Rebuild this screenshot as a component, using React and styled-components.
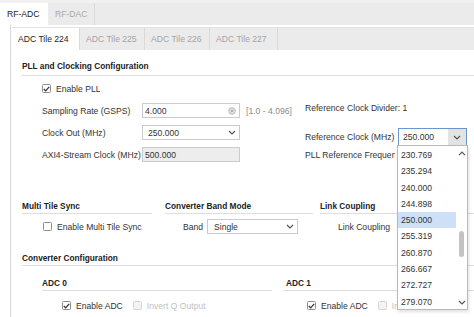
import React from 'react';
import styled, { createGlobalStyle } from 'styled-components';

const GlobalStyle = createGlobalStyle`
  * { box-sizing: border-box; }
  html, body {
    margin: 0;
    padding: 0;
    background: #fff;
  }
  body {
    font-family: "Liberation Sans", Arial, sans-serif;
    font-size: 8.6px;
    color: #333;
    overflow: hidden;
  }
`;

const Page = styled.div`
  width: 474px;
  height: 317px;
  overflow: hidden;
  background: #fff;
`;

const TopTabBar = styled.div`
  display: flex;
  height: 25px;
  background: #ebebeb;
  border-top: 3px solid #f1f1f1;
`;

const TopTab = styled.div`
  display: flex;
  align-items: center;
  width: ${p => p.$w}px;
  padding-left: 7px;
  background: ${p => (p.$active ? '#fff' : 'transparent')};
  color: ${p => (p.$active ? '#222' : '#a9a9a9')};
  border-right: ${p => (p.$active ? 'none' : '1px solid #d9d9d9')};
  white-space: nowrap;
`;

const Panel = styled.div`
  margin-left: 10px;
  border-left: 1px solid #d6d6d6;
  padding-top: 2px;
  height: 292px;
`;

const TileTabBar = styled.div`
  display: flex;
  height: 23px;
  margin-left: 1px;
  background: #ebebeb;
  border-top: 1px solid #e2e2e2;
`;

const TileTab = styled.div`
  display: flex;
  align-items: center;
  width: ${p => p.$w}px;
  padding-left: 6px;
  background: ${p => (p.$active ? '#fff' : 'transparent')};
  color: ${p => (p.$active ? '#1e1e1e' : '#a4a4a4')};
  border-right: 1px solid #d9d9d9;
  white-space: nowrap;
`;

const Body = styled.div`
  padding-left: 11px;
`;

const Heading = styled.div`
  font-weight: bold;
  font-size: 8.3px;
  color: #222;
  line-height: 11px;
  padding-top: ${p => p.$pt || 0}px;
  padding-bottom: ${p => (p.$pb == null ? 1 : p.$pb)}px;
  padding-left: ${p => p.$pl || 0}px;
  margin-top: ${p => p.$mt || 0}px;
  border-bottom: 1px solid #dedede;
  white-space: nowrap;
`;

const PllGrid = styled.div`
  display: flex;
`;

const LeftCol = styled.div`
  width: 283px;
  padding: 5px 0 0 20px;
  display: flex;
  flex-direction: column;
  gap: 7px;
`;

const RightCol = styled.div`
  display: flex;
  flex-direction: column;
`;

const Row = styled.div`
  display: flex;
  align-items: center;
  height: ${p => p.$h || 15}px;
  margin-top: ${p => p.$mt || 0}px;
  padding-left: ${p => p.$pl || 0}px;
  white-space: nowrap;
`;

const Label = styled.span`
  width: ${p => (p.$w ? `${p.$w}px` : 'auto')};
  flex-shrink: 0;
  overflow: hidden;
  color: ${p => (p.$disabled ? '#c2c2c2' : '#333')};
  white-space: nowrap;
`;

const Field = styled.div`
  position: relative;
  display: flex;
  align-items: center;
  justify-content: space-between;
  width: ${p => p.$w}px;
  height: ${p => p.$h || 15}px;
  padding: 0 3px 0 ${p => p.$pl || 2}px;
  border: 1px solid ${p => (p.$focus ? '#6b95cf' : '#cbcbcb')};
  background: ${p => (p.$readonly ? '#ededed' : '#fff')};
  color: #333;
  flex-shrink: 0;
`;

const ChevronBox = styled.div`
  display: flex;
  align-items: center;
  justify-content: center;
  align-self: stretch;
  width: 18px;
  margin-right: -3px;
  background: #e3e3e3;
`;

const Range = styled.span`
  margin-left: 6px;
  color: #8c8c8c;
`;

const Check = styled.span`
  display: inline-flex;
  align-items: center;
  justify-content: center;
  width: 9px;
  height: 9px;
  margin-right: 5px;
  margin-left: ${p => p.$ml || 0}px;
  border: 1px solid ${p => (p.$disabled ? '#d4d4d4' : '#8c8c8c')};
  border-radius: 1.5px;
  background: ${p => (p.$disabled ? '#f3f3f3' : '#fff')};
  flex-shrink: 0;
`;

const DropList = styled.div`
  position: absolute;
  top: 100%;
  left: -2px;
  width: 71px;
  height: 165px;
  display: flex;
  z-index: 10;
  background: #fff;
  border: 1px solid #b9b9b9;
  box-shadow: 1px 2px 3px rgba(0, 0, 0, 0.12);
`;

const Items = styled.div`
  flex: 1;
  overflow: hidden;
  padding-top: 1px;
`;

const Item = styled.div`
  height: 16.3px;
  line-height: 16.3px;
  padding-left: 3px;
  color: #333;
  background: ${p => (p.$selected ? '#cde0f7' : 'transparent')};
`;

const ScrollBar = styled.div`
  width: 11px;
  display: flex;
  flex-direction: column;
  align-items: center;
`;

const ScrollArrow = styled.div`
  height: 14px;
  display: flex;
  align-items: center;
  justify-content: center;
`;

const Track = styled.div`
  flex: 1;
  width: 100%;
  display: flex;
  justify-content: center;
`;

const Thumb = styled.div`
  width: 5px;
  height: 26px;
  margin-top: ${p => p.$top}px;
  border-radius: 3px;
  background: #c3c3c3;
`;

const Columns = styled.div`
  display: flex;
  margin-top: ${p => p.$mt || 0}px;
  margin-left: ${p => p.$ml || 0}px;
`;

const Column = styled.div`
  width: ${p => (p.$w ? `${p.$w}px` : 'auto')};
  flex: ${p => (p.$w ? '0 0 auto' : '1')};
  margin-left: ${p => p.$ml || 0}px;
`;

const Chevron = ({ up }) => (
  <svg width="8" height="5" viewBox="0 0 8 5">
    <polyline
      points={up ? '1,4.2 4,1.2 7,4.2' : '1,1 4,4 7,1'}
      fill="none"
      stroke="#555"
      strokeWidth="1.2"
    />
  </svg>
);

const ClearIcon = () => (
  <svg width="8" height="8" viewBox="0 0 8 8">
    <circle cx="4" cy="4" r="3.4" fill="#e2e2e2" stroke="#b9b9b9" strokeWidth="0.9" />
    <path d="M2.6 2.6 L5.4 5.4 M5.4 2.6 L2.6 5.4" stroke="#a8a8a8" strokeWidth="0.9" />
  </svg>
);

const Checkbox = ({ checked, disabled, ml }) => (
  <Check $disabled={disabled} $ml={ml}>
    {checked && (
      <svg width="7" height="6" viewBox="0 0 7 6">
        <polyline points="0.8,3 2.7,4.9 6.2,0.9" fill="none" stroke="#333" strokeWidth="1.3" />
      </svg>
    )}
  </Check>
);

const clockOptions = [
  '230.769', '235.294', '240.000', '244.898', '250.000',
  '255.319', '260.870', '266.667', '272.727', '279.070',
];

const tiles = [
  { name: 'ADC Tile 224', w: 68 },
  { name: 'ADC Tile 225', w: 65 },
  { name: 'ADC Tile 226', w: 65 },
  { name: 'ADC Tile 227', w: 68 },
];

export default function App() {
  return (
    <Page>
      <GlobalStyle />
      <TopTabBar>
        <TopTab $active $w={48}>RF-ADC</TopTab>
        <TopTab $w={47}>RF-DAC</TopTab>
      </TopTabBar>
      <Panel>
        <TileTabBar>
          {tiles.map((t, i) => (
            <TileTab key={t.name} $w={t.w} $active={i === 0}>{t.name}</TileTab>
          ))}
        </TileTabBar>
        <Body>
          <Heading $pt={11} $pb={3}>PLL and Clocking Configuration</Heading>
          <PllGrid>
            <LeftCol>
              <Row>
                <Checkbox checked />
                <Label>Enable PLL</Label>
              </Row>
              <Row>
                <Label $w={100}>Sampling Rate (GSPS)</Label>
                <Field $w={98}>
                  4.000
                  <ClearIcon />
                </Field>
                <Range>[1.0 - 4.096]</Range>
              </Row>
              <Row>
                <Label $w={100}>Clock Out (MHz)</Label>
                <Field $w={98} $pl={5}>
                  250.000
                  <Chevron />
                </Field>
              </Row>
              <Row>
                <Label $w={100}>AXI4-Stream Clock (MHz)</Label>
                <Field $w={98} $readonly>500.000</Field>
              </Row>
            </LeftCol>
            <RightCol>
              <Row $mt={24}>
                <Label>Reference Clock Divider: 1</Label>
              </Row>
              <Row $mt={13} $h={18}>
                <Label $w={93}>Reference Clock (MHz)</Label>
                <Field $w={69} $h={18} $pl={4} $focus>
                  250.000
                  <ChevronBox><Chevron /></ChevronBox>
                  <DropList>
                    <Items>
                      {clockOptions.map(v => (
                        <Item key={v} $selected={v === '250.000'}>{v}</Item>
                      ))}
                    </Items>
                    <ScrollBar>
                      <ScrollArrow><Chevron up /></ScrollArrow>
                      <Track><Thumb $top={71} /></Track>
                      <ScrollArrow><Chevron /></ScrollArrow>
                    </ScrollBar>
                  </DropList>
                </Field>
              </Row>
              <Row $mt={1}>
                <Label $w={90}>PLL Reference Frequency (MHz)</Label>
              </Row>
            </RightCol>
          </PllGrid>

          <Columns $mt={39}>
            <Column $w={130}>
              <Heading>Multi Tile Sync</Heading>
              <Row $mt={5} $pl={21}>
                <Checkbox />
                <Label>Enable Multi Tile Sync</Label>
              </Row>
            </Column>
            <Column $w={148} $ml={13}>
              <Heading>Converter Band Mode</Heading>
              <Row $mt={5} $pl={18}>
                <Label $w={24}>Band</Label>
                <Field $w={91} $pl={6}>
                  Single
                  <Chevron />
                </Field>
              </Row>
            </Column>
            <Column $ml={7}>
              <Heading>Link Coupling</Heading>
              <Row $mt={5} $pl={18}>
                <Label $w={60}>Link Coupling</Label>
                <Field $w={60} $pl={4}>
                  <Chevron />
                </Field>
              </Row>
            </Column>
          </Columns>

          <Heading $mt={19}>Converter Configuration</Heading>
          <Columns $mt={12} $ml={20}>
            <Column $w={230}>
              <Heading>ADC 0</Heading>
              <Row $mt={7} $pl={20}>
                <Checkbox checked />
                <Label>Enable ADC</Label>
                <Checkbox disabled ml={10} />
                <Label $disabled>Invert Q Output</Label>
              </Row>
            </Column>
            <Column $ml={11}>
              <Heading $pl={3}>ADC 1</Heading>
              <Row $mt={7} $pl={24}>
                <Checkbox checked />
                <Label>Enable ADC</Label>
                <Checkbox disabled ml={10} />
                <Label $disabled $w={6}>Invert Q Output</Label>
              </Row>
            </Column>
          </Columns>
        </Body>
      </Panel>
    </Page>
  );
}
